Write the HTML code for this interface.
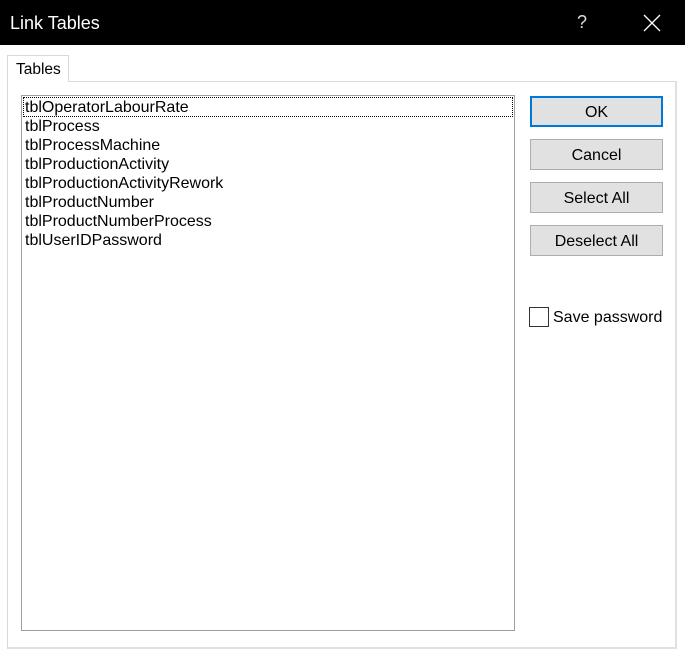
<!DOCTYPE html>
<html><head><meta charset="utf-8"><style>
*{margin:0;padding:0;box-sizing:border-box}
body{width:685px;height:658px;background:#fff;font-family:"Liberation Sans",sans-serif;position:relative;overflow:hidden;color:#000}
.title{position:absolute;left:0;top:0;width:685px;height:45px;background:#000;color:#fff;font-size:18px}
.title .t{position:absolute;left:10px;top:13px}
.title .q{position:absolute;left:577px;top:12px;font-size:18px;color:#ddd}
.tab{position:absolute;left:7px;top:55px;width:62px;height:27px;border:1px solid #d9d9d9;border-bottom:none;background:#fff;font-size:15.5px;padding:5px 0 0 8px;z-index:2}
.panel{position:absolute;left:7px;top:81px;width:670px;height:568px;border:1px solid #d9d9d9;border-right:2px solid #e0e0e0;border-bottom:2px solid #e0e0e0}
.list{position:absolute;left:21px;top:95px;width:494px;height:536px;border:1px solid #a0a0a0;font-size:16px}
.list div{height:19px;line-height:21px;padding-left:3px}
.list .f{position:absolute;left:1px;top:1px;width:490px;height:20px;border:1px dotted #000}
.btn{position:absolute;left:530px;width:133px;height:31px;background:#e1e1e1;border:1px solid #adadad;font-size:16px;text-align:center;line-height:31px}
.ok{border:2px solid #0078d7;line-height:29px}
.cb{position:absolute;left:529px;top:307px;width:20px;height:20px;border:1px solid #333;background:#fff}
.cbl{position:absolute;left:553px;top:308px;font-size:16px;line-height:20px}
</style></head><body>
<div class="title"><span class="t">Link Tables</span><span class="q">?</span>
<svg style="position:absolute;left:643px;top:14px" width="18" height="18"><path d="M1 1L17 17M17 1L1 17" stroke="#fff" stroke-width="1.3"/></svg></div>
<div class="panel"></div>
<div class="tab">Tables</div>
<div class="list" style="padding-top:1px">
<span class="f"></span>
<div>tblOperatorLabourRate</div><div>tblProcess</div><div>tblProcessMachine</div><div>tblProductionActivity</div><div>tblProductionActivityRework</div><div>tblProductNumber</div><div>tblProductNumberProcess</div><div>tblUserIDPassword</div>
</div>
<div class="btn ok" style="top:96px">OK</div>
<div class="btn" style="top:139px">Cancel</div>
<div class="btn" style="top:182px">Select All</div>
<div class="btn" style="top:225px">Deselect All</div>
<div class="cb"></div><div class="cbl">Save password</div>
</body></html>
